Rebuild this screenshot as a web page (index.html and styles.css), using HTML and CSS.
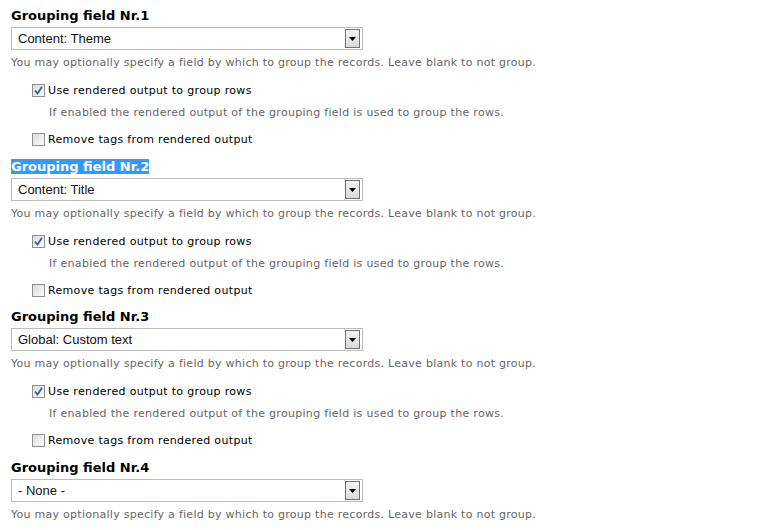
FILE: index.html
```html
<!DOCTYPE html>
<html>
<head>
<meta charset="utf-8">
<link rel="stylesheet" href="styles.css">
</head>
<body>
<div class="page">
  <div class="group">
    <div class="title"><span>Grouping field Nr.1</span></div>
    <div class="select"><span class="value">Content: Theme</span><span class="btn"><svg width="7" height="4" viewBox="0 0 7 4"><path d="M0 0H7L3.5 4Z" fill="#000"/></svg></span></div>
    <div class="desc">You may optionally specify a field by which to group the records. Leave blank to not group.</div>
    <div class="opts">
      <div class="opt"><span class="cb checked"><svg width="9" height="9" viewBox="0 0 9 9"><path d="M1 4.5L3.5 7.5L8 0.8" fill="none" stroke="#3c5a9a" stroke-width="1.8"/></svg></span><span class="lbl">Use rendered output to group rows</span></div>
      <div class="subdesc">If enabled the rendered output of the grouping field is used to group the rows.</div>
      <div class="opt opt2"><span class="cb"></span><span class="lbl">Remove tags from rendered output</span></div>
    </div>
  </div>
  <div class="group g2">
    <div class="title"><span class="hl">Grouping field Nr.2</span></div>
    <div class="select"><span class="value">Content: Title</span><span class="btn"><svg width="7" height="4" viewBox="0 0 7 4"><path d="M0 0H7L3.5 4Z" fill="#000"/></svg></span></div>
    <div class="desc">You may optionally specify a field by which to group the records. Leave blank to not group.</div>
    <div class="opts">
      <div class="opt"><span class="cb checked"><svg width="9" height="9" viewBox="0 0 9 9"><path d="M1 4.5L3.5 7.5L8 0.8" fill="none" stroke="#3c5a9a" stroke-width="1.8"/></svg></span><span class="lbl">Use rendered output to group rows</span></div>
      <div class="subdesc">If enabled the rendered output of the grouping field is used to group the rows.</div>
      <div class="opt opt2"><span class="cb"></span><span class="lbl">Remove tags from rendered output</span></div>
    </div>
  </div>
  <div class="group">
    <div class="title"><span>Grouping field Nr.3</span></div>
    <div class="select"><span class="value">Global: Custom text</span><span class="btn"><svg width="7" height="4" viewBox="0 0 7 4"><path d="M0 0H7L3.5 4Z" fill="#000"/></svg></span></div>
    <div class="desc">You may optionally specify a field by which to group the records. Leave blank to not group.</div>
    <div class="opts">
      <div class="opt"><span class="cb checked"><svg width="9" height="9" viewBox="0 0 9 9"><path d="M1 4.5L3.5 7.5L8 0.8" fill="none" stroke="#3c5a9a" stroke-width="1.8"/></svg></span><span class="lbl">Use rendered output to group rows</span></div>
      <div class="subdesc">If enabled the rendered output of the grouping field is used to group the rows.</div>
      <div class="opt opt2"><span class="cb"></span><span class="lbl">Remove tags from rendered output</span></div>
    </div>
  </div>
  <div class="group">
    <div class="title"><span>Grouping field Nr.4</span></div>
    <div class="select"><span class="value">- None -</span><span class="btn"><svg width="7" height="4" viewBox="0 0 7 4"><path d="M0 0H7L3.5 4Z" fill="#000"/></svg></span></div>
    <div class="desc">You may optionally specify a field by which to group the records. Leave blank to not group.</div>
  </div>
</div>
</body>
</html>
```
FILE: styles.css
```css
html, body {
  margin: 0;
  padding: 0;
  background: #fff;
}
.page {
  padding: 8px 0 0 11px;
  font-family: "DejaVu Sans", Verdana, sans-serif;
  color: #000;
}
.group {
  margin-bottom: 12px;
  display: flex;
  flex-direction: column;
}
.g2 {
  margin-bottom: 11px;
}
.title {
  font-size: 13px;
  font-weight: bold;
  line-height: 16px;
  height: 16px;
  color: #000;
}
.title .hl {
  background: #3399ff;
  color: #fff;
}
.select {
  margin-top: 3px;
  width: 350px;
  height: 21px;
  border: 1px solid #bcbcbc;
  display: flex;
  align-items: center;
  justify-content: space-between;
  background: #fff;
}
.value {
  font-family: "Liberation Sans", Arial, sans-serif;
  font-size: 13px;
  color: #111;
  padding-left: 6px;
}
.btn {
  width: 13px;
  height: 17px;
  margin-right: 2px;
  border: 1px solid #707070;
  background: linear-gradient(#f4f4f4, #dadada);
  display: flex;
  align-items: center;
  justify-content: center;
}
.desc {
  margin-top: 5px;
  font-size: 11px;
  letter-spacing: 0.27px;
  line-height: 16px;
  color: #666;
}
.opts {
  padding-left: 21px;
}
.opt {
  margin-top: 11px;
  height: 16px;
  display: flex;
  align-items: center;
  font-size: 11px;
  letter-spacing: 0.33px;
  color: #000;
}
.cb {
  width: 11px;
  height: 11px;
  border: 1px solid #8f8f8f;
  background: linear-gradient(135deg, #dcdcdc, #fbfbfb);
  margin-right: 3px;
  display: flex;
  align-items: center;
  justify-content: center;
  flex: none;
}
.subdesc {
  margin-top: 7px;
  padding-left: 17px;
  font-size: 11px;
  letter-spacing: 0.3px;
  line-height: 16px;
  color: #666;
}
.opt2 {
  margin-top: 10px;
}
```
